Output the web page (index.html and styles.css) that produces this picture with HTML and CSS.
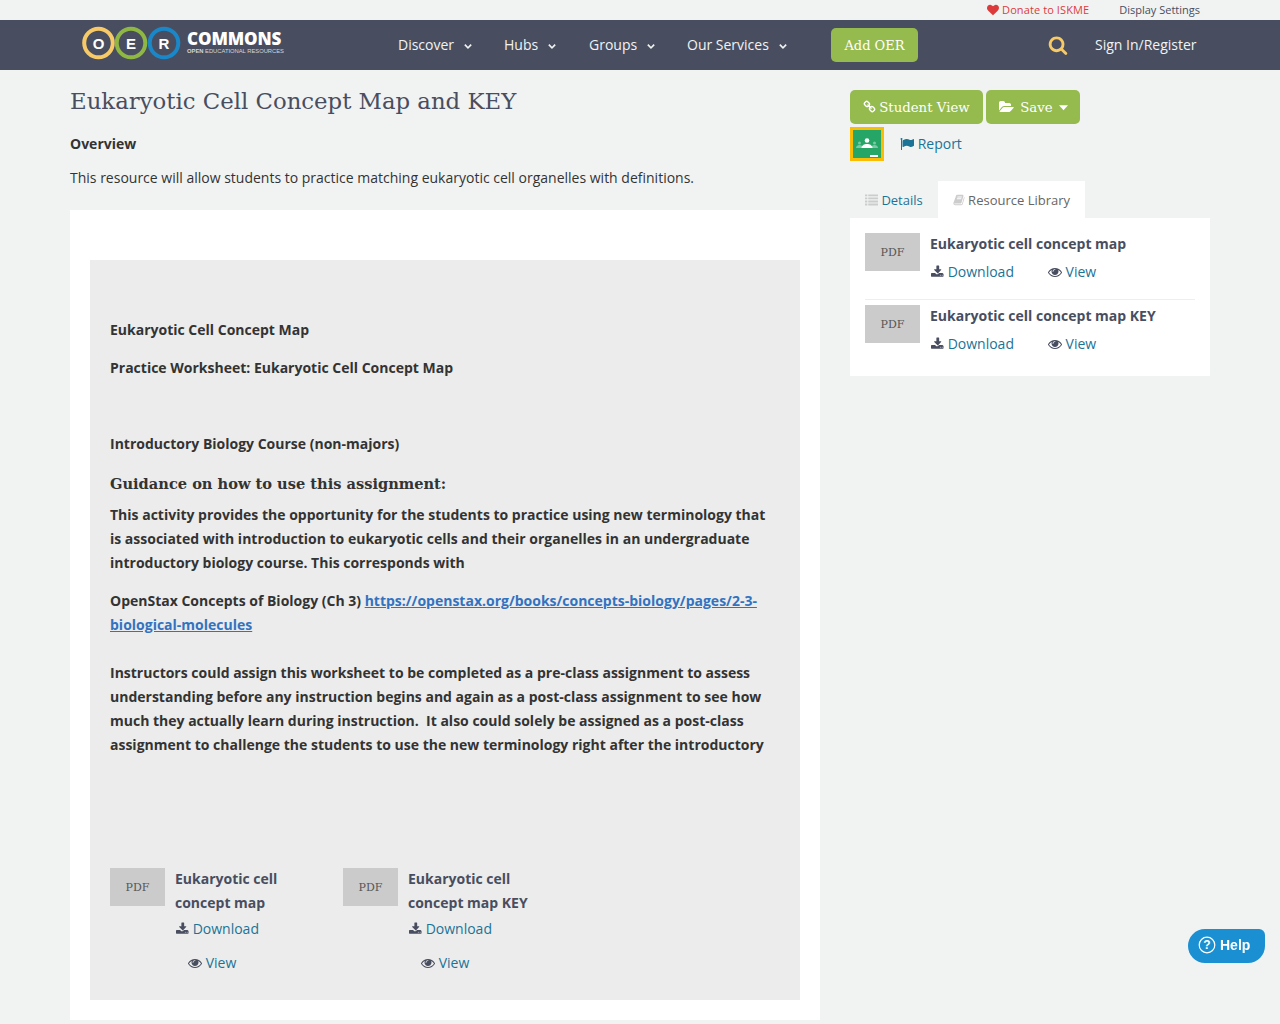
FILE: index.html
```html
<!DOCTYPE html>
<html lang="en">
<head>
    <meta charset="UTF-8">
    <meta name="viewport" content="width=device-width, initial-scale=1.0">
    <title>Eukaryotic Cell Concept Map and KEY</title>
    <link rel="stylesheet" href="styles.css">
</head>
<body>
    <svg class="sprite" xmlns="http://www.w3.org/2000/svg">
        <symbol id="i-heart" viewBox="0 0 1792 1792"><path d="M896 1664q-26 0-44-18l-624-602q-10-8-27.5-26t-55.5-65.5-68-97.5-53.5-121-23.5-138q0-220 127-344t351-124q62 0 126.5 21.5t120 58 95.5 68.5 76 68q36-36 76-68t95.5-68.5 120-58 126.5-21.5q224 0 351 124t127 344q0 221-229 450l-623 600q-18 18-44 18z"/></symbol>
        <symbol id="i-search" viewBox="0 0 1792 1792"><path d="M1216 832q0-185-131.5-316.5t-316.5-131.5-316.5 131.5-131.5 316.5 131.5 316.5 316.5 131.5 316.5-131.5 131.5-316.5zm512 832q0 52-38 90t-90 38q-54 0-90-38l-343-342q-179 124-399 124-143 0-273.5-55.5t-225-150-150-225-55.5-273.5 55.5-273.5 150-225 225-150 273.5-55.5 273.5 55.5 225 150 150 225 55.5 273.5q0 220-124 399l343 343q37 37 37 90z"/></symbol>
        <symbol id="i-link" viewBox="0 0 1792 1792"><path d="M1520 1216q0-40-28-68l-208-208q-28-28-68-28-42 0-72 32 3 3 19 18.5t21.5 21.5 15 19 13 25.5 3.5 27.5q0 40-28 68t-68 28q-15 0-27.5-3.5t-25.5-13-19-15-21.5-21.5-18.5-19q-33 31-33 73 0 40 28 68l206 207q27 27 68 27 40 0 68-26l147-146q28-28 28-67zm-703-705q0-40-28-68l-206-207q-28-28-68-28-39 0-68 27l-147 146q-28 28-28 67 0 40 28 68l208 208q27 27 68 27 42 0 72-31-3-3-19-18.5t-21.5-21.5-15-19-13-25.5-3.5-27.5q0-40 28-68t68-28q15 0 27.5 3.5t25.5 13 19 15 21.5 21.5 18.5 19q33-31 33-73zm895 705q0 120-85 203l-147 146q-83 83-203 83-121 0-204-85l-206-207q-83-83-83-203 0-123 88-209l-88-88q-86 88-208 88-120 0-204-84l-208-208q-84-84-84-204t85-203l147-146q83-83 203-83 121 0 204 85l206 207q83 83 83 203 0 123-88 209l88 88q86-88 208-88 120 0 204 84l208 208q84 84 84 204z"/></symbol>
        <symbol id="i-folder" viewBox="0 0 1920 1792"><path d="M1815 952q0 31-31 66l-336 396q-43 51-120.5 86.5t-143.5 35.5h-1088q-34 0-60.5-13t-26.5-43q0-31 31-66l336-396q43-51 120.5-86.5t143.5-35.5h1088q34 0 60.5 13t26.5 43zm-343-344v160h-832q-94 0-197 47.5t-164 119.5l-337 396-5 6q0-4-.5-12.5t-.5-12.5v-960q0-92 66-158t158-66h320q92 0 158 66t66 158v32h544q92 0 158 66t66 158z"/></symbol>
        <symbol id="i-flag" viewBox="0 0 1792 1792"><path d="M320 256q0 72-64 110v1266q0 13-9.5 22.5t-22.5 9.5h-64q-13 0-22.5-9.5t-9.5-22.5v-1266q-64-38-64-110 0-53 37.5-90.5t90.5-37.5 90.5 37.5 37.5 90.5zm1472 64v763q0 25-12.5 38.5t-39.5 27.5q-215 116-369 116-61 0-123.5-22t-108.5-48-115.5-48-142.5-22q-192 0-464 146-17 9-33 9-26 0-45-19t-19-45v-742q0-32 31-55 21-14 79-43 236-120 421-120 107 0 200 29t219 88q38 19 88 19 54 0 117.5-21t110-47 88-47 54.5-21q26 0 45 19t19 45z"/></symbol>
        <symbol id="i-book" viewBox="0 0 1792 1792"><path d="M1703 478q40 57 18 129l-275 906q-19 64-76.5 107.5t-122.5 43.5h-923q-77 0-148.5-53.5t-99.5-131.5q-24-67-2-127 0-4 3-27t4-37q1-8-3-21.5t-3-19.5q2-11 8-21t16.5-23.5 16.5-23.5q23-38 45-91.5t30-91.5q3-10 .5-30t-.5-28q3-11 17-28t17-23q21-36 42-92t25-90q1-9-2.5-32t.5-28q4-13 22-30.5t22-22.5q19-26 42.5-84.5t27.5-96.5q1-8-3-25.5t-2-26.5q2-8 9-18t18-23 17-21q8-12 16.5-30.5t15-35 16-36 19.5-32 26.5-23.5 36-11.5 47.5 5.5l-1 3q38-9 51-9h761q74 0 114 56t18 130l-274 906q-36 119-71.5 153.5t-128.5 34.5h-869q-27 0-38 15-11 16-1 43 24 70 144 70h923q29 0 56-15.5t35-41.5l300-987q7-22 5-57 38 15 59 43zm-1064 2q-4 13 2 22.5t20 9.5h608q13 0 25.5-9.5t16.5-22.5l21-64q4-13-2-22.5t-20-9.5h-608q-13 0-25.5 9.5t-16.5 22.5zm-83 256q-4 13 2 22.5t20 9.5h608q13 0 25.5-9.5t16.5-22.5l21-64q4-13-2-22.5t-20-9.5h-608q-13 0-25.5 9.5t-16.5 22.5z"/></symbol>
        <symbol id="i-download" viewBox="0 0 1792 1792"><path d="M1344 1344q0-26-19-45t-45-19-45 19-19 45 19 45 45 19 45-19 19-45zm256 0q0-26-19-45t-45-19-45 19-19 45 19 45 45 19 45-19 19-45zm128-224v320q0 40-28 68t-68 28H96q-40 0-68-28t-28-68v-320q0-40 28-68t68-28h465l135 136q58 56 136 56t136-56l136-136h464q40 0 68 28t28 68zm-325-569q17 41-14 70L979 1069q-18 19-45 19t-45-19L441 621q-31-29-14-70 17-39 59-39h256V64q0-26 19-45t45-19h256q26 0 45 19t19 45v448h256q42 0 59 39z"/></symbol>
        <symbol id="i-eye" viewBox="0 0 1792 1792"><path d="M1664 960q-152-236-381-353 61 104 61 225 0 185-131.5 316.5t-316.5 131.5-316.5-131.5-131.5-316.5q0-121 61-225-229 117-381 353 133 205 333.5 326.5t434.5 121.5 434.5-121.5 333.5-326.5zm-720-384q0-20-14-34t-34-14q-125 0-214.5 89.5t-89.5 214.5q0 20 14 34t34 14 34-14 14-34q0-86 61-147t147-61q20 0 34-14t14-34zm848 384q0 34-20 69-140 230-376.5 368.5t-499.5 138.5-499.5-139-376.5-368q-20-35-20-69t20-69q140-229 376.5-368t499.5-139 499.5 139 376.5 368q20 35 20 69z"/></symbol>
        <symbol id="i-list" viewBox="0 0 14 12"><path d="M0 0h2.500v2H0zM3.500 0H14v2H3.500zM0 3.300h2.500v2H0zM3.500 3.300H14v2H3.500zM0 6.600h2.500v2H0zM3.500 6.600H14v2H3.500zM0 9.900h2.500v2H0zM3.500 9.900H14v2H3.500z"/></symbol>
        <symbol id="i-chevron" viewBox="0 0 10 8"><path d="M1.800 1 5 4.200 8.200 1l1.500 1.500L5 7.200.3 2.500z"/></symbol>
        <symbol id="i-caret" viewBox="0 0 10 6"><path d="M0 0h10L5 5.500z"/></symbol>
    </svg>

    <div class="topbar">
        <a class="donate" href="#"><svg class="icon"><use href="#i-heart"/></svg> Donate to ISKME</a>
        <a class="display" href="#">Display Settings</a>
    </div>

    <nav class="navbar">
        <a class="logo" href="#">
            <svg class="logo-rings" width="102" height="36" viewBox="0 0 102 36">
                <circle cx="16.500" cy="18" r="14.300" fill="none" stroke="#f7c967" stroke-width="4"/>
                <circle cx="49" cy="18" r="14.300" fill="none" stroke="#8fb744" stroke-width="4"/>
                <circle cx="82" cy="18" r="14.300" fill="none" stroke="#1a87c9" stroke-width="4"/>
                <text x="16.500" y="23.500" class="ring-letter">O</text>
                <text x="49" y="23.500" class="ring-letter">E</text>
                <text x="82" y="23.500" class="ring-letter">R</text>
            </svg>
            <span class="logo-text">
                <span class="logo-name">COMMONS</span>
                <span class="logo-sub"><b>OPEN</b> EDUCATIONAL RESOURCES</span>
            </span>
        </a>
        <ul class="nav-menu">
            <li class="nav-discover">Discover <svg class="chevron"><use href="#i-chevron"/></svg></li>
            <li class="nav-hubs">Hubs <svg class="chevron"><use href="#i-chevron"/></svg></li>
            <li class="nav-groups">Groups <svg class="chevron"><use href="#i-chevron"/></svg></li>
            <li>Our Services <svg class="chevron"><use href="#i-chevron"/></svg></li>
        </ul>
        <a class="add-oer" href="#">Add OER</a>
        <svg class="nav-search"><use href="#i-search"/></svg>
        <a class="signin" href="#">Sign In/Register</a>
    </nav>

    <div class="container">
        <main class="main-col">
            <h1>Eukaryotic Cell Concept Map and KEY</h1>
            <h2 class="overview-title">Overview</h2>
            <p class="overview">This resource will allow students to practice matching eukaryotic cell organelles with definitions.</p>

            <div class="content-box">
                <div class="resource-body">
                    <p>&nbsp;</p>
                    <p>Eukaryotic Cell Concept Map</p>
                    <p>Practice Worksheet: Eukaryotic Cell Concept Map</p>
                    <p>&nbsp;</p>
                    <p>Introductory Biology Course (non-majors)</p>
                    <h3>Guidance on how to use this assignment:</h3>
                    <p>This activity provides the opportunity for the students to practice using new terminology that is associated with introduction to eukaryotic cells and their organelles in an undergraduate introductory biology course. This corresponds with</p>
                    <p class="para-gap">OpenStax Concepts of Biology (Ch 3) <a href="#">https://openstax.org/books/concepts-biology/pages/2-3-biological-molecules</a></p>
                    <p>Instructors could assign this worksheet to be completed as a pre-class assignment to assess understanding before any instruction begins and again as a post-class assignment to see how much they actually learn during instruction.&nbsp; It also could solely be assigned as a post-class assignment to challenge the students to use the new terminology right after the introductory</p>

                    <div class="attachments">
                        <div class="attachment">
                            <div class="thumb">PDF</div>
                            <div class="attachment-info">
                                <div class="file-title">Eukaryotic cell concept map</div>
                                <a class="file-link" href="#"><svg class="icon dl"><use href="#i-download"/></svg> Download</a>
                                <a class="file-link view-link" href="#"><svg class="icon eye"><use href="#i-eye"/></svg> View</a>
                            </div>
                        </div>
                        <div class="attachment">
                            <div class="thumb">PDF</div>
                            <div class="attachment-info">
                                <div class="file-title">Eukaryotic cell concept map KEY</div>
                                <a class="file-link" href="#"><svg class="icon dl"><use href="#i-download"/></svg> Download</a>
                                <a class="file-link view-link" href="#"><svg class="icon eye"><use href="#i-eye"/></svg> View</a>
                            </div>
                        </div>
                    </div>
                </div>
            </div>
        </main>

        <aside class="side-col">
            <div class="actions">
                <a class="btn btn-student" href="#"><svg class="icon"><use href="#i-link"/></svg> Student View</a>
                <a class="btn btn-save" href="#"><svg class="icon folder"><use href="#i-folder"/></svg> Save <svg class="caret"><use href="#i-caret"/></svg></a>
            </div>
            <div class="share-row">
                <a class="classroom" href="#" aria-label="Share to Google Classroom">
                    <svg width="28" height="28" viewBox="0 0 28 28">
                        <rect width="28" height="28" fill="#25a667"/>
                        <circle cx="6.500" cy="13" r="1.500" fill="#7cc8a2"/>
                        <circle cx="21.500" cy="13" r="1.500" fill="#7cc8a2"/>
                        <path d="M3 18c0-2 1.700-3 3.500-3s3.500 1 3.500 3zM18 18c0-2 1.700-3 3.500-3s3.500 1 3.500 3z" fill="#7cc8a2"/>
                        <circle cx="14" cy="10.500" r="2.300" fill="#fff"/>
                        <path d="M8.500 18c0-2.500 2.700-4 5.500-4s5.500 1.500 5.500 4z" fill="#fff"/>
                        <rect x="17" y="25" width="8" height="2" fill="#fff"/>
                    </svg>
                </a>
                <a class="report" href="#"><svg class="icon"><use href="#i-flag"/></svg> Report</a>
            </div>

            <div class="tabs">
                <a class="tab" href="#"><svg class="icon tab-icon"><use href="#i-list"/></svg> Details</a>
                <a class="tab tab-active" href="#"><svg class="icon tab-icon book"><use href="#i-book"/></svg> Resource Library</a>
            </div>
            <div class="tab-panel">
                <div class="library-row">
                    <div class="thumb">PDF</div>
                    <div class="library-info">
                        <div class="file-title">Eukaryotic cell concept map</div>
                        <div class="library-links">
                            <a class="file-link" href="#"><svg class="icon dl"><use href="#i-download"/></svg> Download</a>
                            <a class="file-link" href="#"><svg class="icon eye"><use href="#i-eye"/></svg> View</a>
                        </div>
                    </div>
                </div>
                <div class="library-row">
                    <div class="thumb">PDF</div>
                    <div class="library-info">
                        <div class="file-title">Eukaryotic cell concept map KEY</div>
                        <div class="library-links">
                            <a class="file-link" href="#"><svg class="icon dl"><use href="#i-download"/></svg> Download</a>
                            <a class="file-link" href="#"><svg class="icon eye"><use href="#i-eye"/></svg> View</a>
                        </div>
                    </div>
                </div>
            </div>
        </aside>
    </div>

    <a class="help-btn" href="#">
        <svg width="18" height="18" viewBox="0 0 18 18">
            <circle cx="9" cy="9" r="7.800" fill="none" stroke="#fff" stroke-width="1.200"/>
            <text x="9" y="13" class="help-mark">?</text>
        </svg>
        Help
    </a>
</body>
</html>
```

FILE: styles.css
```css
body {
    font-family: "Open Sans", sans-serif;
    font-size: 14px;
    line-height: 24px;
    margin: 0;
    padding: 0;
    color: #333;
    background-color: #f1f3f2;
}
a {
    text-decoration: none;
    color: #1b7396;
}
.sprite {
    display: none;
}
.icon {
    width: 14px;
    height: 14px;
    fill: currentColor;
    vertical-align: -2px;
}

/* top strip */
.topbar {
    height: 20px;
    display: flex;
    justify-content: flex-end;
    align-items: center;
    gap: 30px;
    padding-right: 80px;
    font-size: 11px;
    line-height: 20px;
}
.donate {
    color: #dd3b3b;
    font-weight: 500;
    letter-spacing: .1px;
}
.donate .icon {
    width: 12px;
    height: 12px;
}
.display {
    color: #484e5f;
}

/* nav */
.navbar {
    height: 50px;
    display: flex;
    align-items: center;
    padding-left: 82px;
    background-color: #484e60;
    color: #f1f3f2;
}
.logo {
    display: flex;
    align-items: center;
    gap: 3px;
    width: 316px;
    color: #fff;
}
.logo-rings {
    flex: none;
    margin-top: -4px;
}
.ring-letter {
    font-family: "Liberation Sans", sans-serif;
    font-size: 15px;
    font-weight: 700;
    fill: #fff;
    text-anchor: middle;
}
.logo-text {
    display: flex;
    flex-direction: column;
    margin-top: -5px;
}
.logo-name {
    font-family: "Open Sans", sans-serif;
    font-size: 17px;
    font-weight: 800;
    line-height: 17px;
    letter-spacing: -.1px;
}
.logo-sub {
    font-family: "Liberation Sans", sans-serif;
    font-size: 5.800px;
    line-height: 8px;
    color: #d4d6da;
    white-space: nowrap;
}
.nav-menu {
    display: flex;
    list-style: none;
    margin: 0;
    padding: 0;
    font-size: 14px;
    width: 433px;
}
.nav-menu li {
    white-space: nowrap;
}
.nav-discover {
    width: 106px;
}
.nav-hubs {
    width: 85px;
}
.nav-groups {
    width: 98px;
}
.chevron {
    width: 8px;
    height: 7px;
    margin-left: 6px;
    fill: #f1f3f2;
}
.add-oer {
    width: 87px;
    height: 34px;
    font-family: "DejaVu Serif", serif;
    font-size: 13px;
    line-height: 35px;
    text-align: center;
    color: #fff;
    background-color: #95ba4d;
    border-radius: 5px;
}
.nav-search {
    width: 20px;
    height: 20px;
    margin-left: 130px;
    fill: #f7c967;
}
.signin {
    margin-left: 27px;
    font-size: 14px;
    color: #f1f3f2;
}

/* page columns */
.container {
    display: flex;
    gap: 30px;
    padding-left: 70px;
}
.main-col {
    width: 750px;
}
.side-col {
    width: 360px;
}
h1 {
    margin: 16px 0 16px;
    font-family: "DejaVu Serif", serif;
    font-size: 22.800px;
    font-weight: 400;
    line-height: 30px;
    color: #484e60;
}
.overview-title {
    margin: 0 0 10px;
    font-size: 14px;
    font-weight: 700;
    line-height: 24px;
}
.overview {
    margin: 0 0 20px;
}
.content-box {
    background-color: #fff;
    padding: 50px 20px 20px;
}
.resource-body {
    height: 700px;
    padding: 20px;
    background-color: #ececec;
    font-weight: 700;
}
.resource-body p {
    margin: 0 0 14px;
}
.resource-body a {
    color: #3273c0;
    text-decoration: underline;
}
.resource-body .para-gap {
    margin-bottom: 24px;
}
h3 {
    margin: 0 0 5px;
    font-family: "DejaVu Serif", serif;
    font-size: 14.600px;
    font-weight: 700;
    line-height: 28px;
}

/* attachments */
.attachments {
    display: flex;
    gap: 13px;
    margin-top: 111px;
    color: #484e60;
}
.attachment {
    display: flex;
    gap: 10px;
    width: 220px;
}
.attachment-info {
    margin-top: -1px;
}
.thumb {
    flex: none;
    width: 55px;
    height: 38px;
    font-family: "DejaVu Serif", serif;
    font-size: 11px;
    font-weight: 400;
    line-height: 39px;
    text-align: center;
    color: #555;
    background-color: #cbcbcb;
}
.file-title {
    font-weight: 700;
    color: #484e60;
}
.resource-body .file-link {
    display: block;
    margin-top: 2px;
    font-weight: 400;
    text-decoration: none;
    color: #1b7396;
}
.resource-body .view-link {
    margin-top: 10px;
    margin-left: 13px;
}
.file-link .icon {
    color: #484e60;
}
.file-link .dl {
    margin-left: 1px;
    width: 13px;
}

/* side column */
.actions {
    display: flex;
    gap: 3px;
    margin-top: 20px;
}
.btn {
    height: 34px;
    font-family: "DejaVu Serif", serif;
    font-size: 13.300px;
    line-height: 36px;
    color: #fff;
    background-color: #95ba4d;
    border-radius: 5px;
    box-sizing: border-box;
    white-space: nowrap;
}
.btn-student {
    width: 133px;
    padding-left: 13px;
}
.btn-student .icon {
    width: 13px;
    margin-right: -1px;
}
.btn-save {
    width: 94px;
    padding-left: 13px;
}
.btn-save .folder {
    width: 16px;
    margin-right: 1px;
}
.caret {
    width: 9px;
    height: 6px;
    margin-left: 2px;
    fill: #fff;
    vertical-align: 1px;
}
.share-row {
    display: flex;
    align-items: center;
    gap: 16px;
    margin-top: 3px;
}
.classroom {
    display: block;
    width: 28px;
    height: 28px;
    border: 3px solid #fbbc04;
}
.classroom svg {
    display: block;
}
.tabs {
    display: flex;
    margin-top: 20px;
    font-size: 13px;
}
.tab {
    height: 37px;
    padding: 0 15px;
    line-height: 38px;
}
.tab-icon {
    width: 13px;
    height: 12px;
    color: #ccc;
    vertical-align: -1px;
}
.tab-icon.book {
    width: 12px;
}
.tab-active {
    color: #666;
    background-color: #fff;
}
.tab-panel {
    padding: 15px 15px 10px;
    background-color: #fff;
}
.library-row {
    display: flex;
    gap: 10px;
}
.library-row + .library-row {
    margin-top: 5px;
    padding-top: 5px;
    border-top: 1px solid #eee;
}
.library-info {
    flex: 1;
}
.library-row .file-title {
    margin-top: -1px;
}
.library-links {
    display: flex;
    gap: 34px;
    margin-top: 4px;
    margin-bottom: 10px;
}

/* floating help */
.help-btn {
    position: fixed;
    right: 15px;
    bottom: 61px;
    width: 77px;
    height: 34px;
    display: flex;
    align-items: center;
    gap: 4px;
    padding: 0 0 2px 10px;
    box-sizing: border-box;
    font-family: "Liberation Sans", sans-serif;
    font-size: 14px;
    font-weight: 700;
    color: #fff;
    background-color: #1a8fd1;
    border-radius: 17px 6px 17px 17px;
}
.help-mark {
    font-family: "Liberation Sans", sans-serif;
    font-size: 12px;
    font-weight: 700;
    fill: #fff;
    text-anchor: middle;
}
```
